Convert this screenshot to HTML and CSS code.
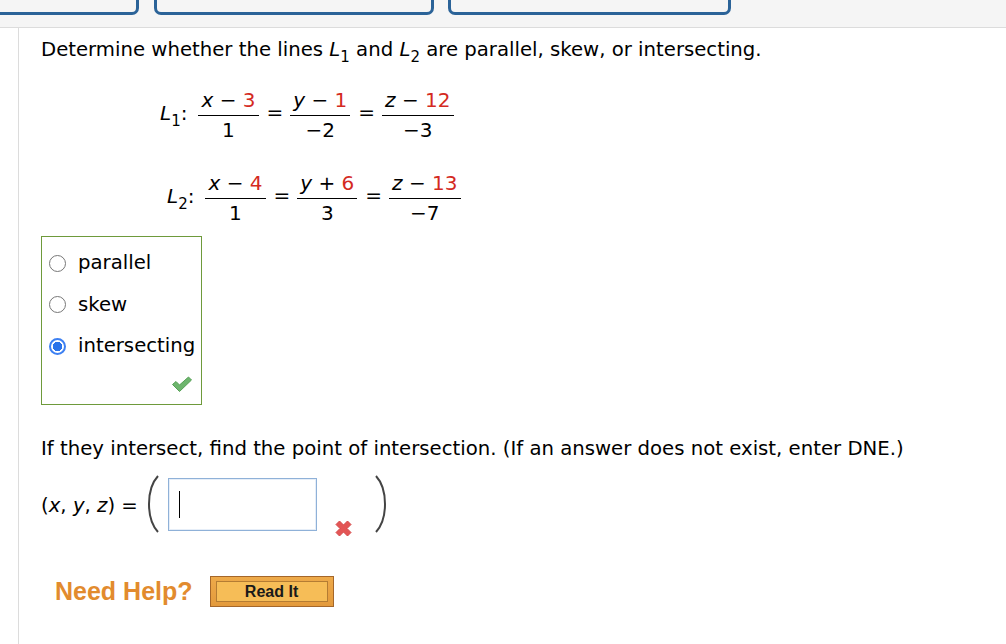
FILE: index.html
```html
<!DOCTYPE html>
<html>
<head>
<meta charset="utf-8">
<link rel="stylesheet" href="styles.css">
</head>
<body>
<div class="topbar">
  <div class="tab tab1"></div>
  <div class="tab tab2"></div>
  <div class="tab tab3"></div>
</div>
<div class="main">
  <p class="q">Determine whether the lines <i>L</i><sub>1</sub> and <i>L</i><sub>2</sub> are parallel, skew, or intersecting.</p>

  <div class="eq eq1">
    <span class="lab"><i>L</i><sub>1</sub>:</span>
    <span class="frac"><span class="num"><i>x</i> &minus; <span class="red">3</span></span><span class="den">1</span></span>
    <span class="eqs">=</span>
    <span class="frac"><span class="num"><i>y</i> &minus; <span class="red">1</span></span><span class="den">&minus;2</span></span>
    <span class="eqs">=</span>
    <span class="frac"><span class="num"><i>z</i> &minus; <span class="red">12</span></span><span class="den">&minus;3</span></span>
  </div>

  <div class="eq eq2">
    <span class="lab"><i>L</i><sub>2</sub>:</span>
    <span class="frac"><span class="num"><i>x</i> &minus; <span class="red">4</span></span><span class="den">1</span></span>
    <span class="eqs">=</span>
    <span class="frac"><span class="num"><i>y</i> + <span class="red">6</span></span><span class="den">3</span></span>
    <span class="eqs">=</span>
    <span class="frac"><span class="num"><i>z</i> &minus; <span class="red">13</span></span><span class="den">&minus;7</span></span>
  </div>

  <div class="choices">
    <label class="opt"><span class="radio"></span>parallel</label>
    <label class="opt"><span class="radio"></span>skew</label>
    <label class="opt"><span class="radio on"></span>intersecting</label>
    <div class="check">
      <svg width="22" height="17" viewBox="0 0 22 17"><path d="M1.5 8.5 L5 5.5 L8.5 9 L17.5 1 L20.5 4 L8.5 15.5 Z" fill="#6db56d" stroke="#55a055" stroke-width="1" stroke-linejoin="round"/></svg>
    </div>
  </div>

  <p class="q2">If they intersect, find the point of intersection. (If an answer does not exist, enter DNE.)</p>

  <div class="answer">
    <span class="xyz">(<i>x</i>, <i>y</i>, <i>z</i>) =</span>
    <svg class="paren" width="16" height="58" viewBox="0 0 16 58"><path d="M14 1 C2 14 2 44 14 57" fill="none" stroke="#444" stroke-width="2"/></svg>
    <span class="box"><span class="caret"></span></span>
    <span class="xmark">
      <svg width="21" height="19" viewBox="0 0 21 19"><path d="M3 5.5 L6.5 2 L10.5 6 L14.5 2 L18 5.5 L14 9.5 L18 13.5 L14.5 17 L10.5 13 L6.5 17 L3 13.5 L7 9.5 Z" fill="#e35555" stroke="#d54848" stroke-width="1" stroke-linejoin="round"/></svg>
    </span>
    <svg class="paren" width="16" height="58" viewBox="0 0 16 58"><path d="M2 1 C14 14 14 44 2 57" fill="none" stroke="#444" stroke-width="2"/></svg>
  </div>

  <div class="help">
    <span class="need">Need Help?</span>
    <span class="readit"><span class="inner">Read It</span></span>
  </div>
</div>
</body>
</html>
```
FILE: styles.css
```css
html, body {
  margin: 0;
  padding: 0;
  background: #fff;
  font-family: "DejaVu Sans", Verdana, sans-serif;
  color: #000;
}
.topbar {
  height: 27px;
  background: #f5f5f5;
  border-bottom: 1px solid #dcdcdc;
  position: relative;
  overflow: hidden;
}
.tab {
  position: absolute;
  top: -10px;
  height: 19px;
  border: 3px solid #2b6398;
  border-radius: 0 0 7px 7px;
  background: #f5f5f5;
}
.tab1 { left: -20px; width: 153px; }
.tab2 { left: 154px; width: 274px; }
.tab3 { left: 448px; width: 277px; }

.main {
  margin-left: 18px;
  border-left: 1px solid #dcdcdc;
  padding-left: 22px;
  min-height: 616px;
  padding-top: 10px;
  box-sizing: border-box;
}
.q, .q2 {
  font-size: 19.7px;
  margin: 0;
  line-height: 24px;
}
sub { font-size: 15px; vertical-align: -6px; line-height: 0; }
i { font-style: italic; }
.red { color: #d42a1f; }

.eq {
  display: flex;
  align-items: center;
  font-size: 20px;
  line-height: 20px;
}
.eq1 { margin-top: 28px; padding-left: 119px; }
.eq2 { margin-top: 33px; padding-left: 126px; }
.lab { margin-right: 11px; padding-bottom: 4px; }
.frac {
  display: inline-flex;
  flex-direction: column;
  align-items: center;
}
.num {
  align-self: stretch;
  text-align: center;
  border-bottom: 1px solid #000;
  padding: 0 3px 5px;
  white-space: nowrap;
}
.den { padding-top: 4px; }
.eqs { margin: 0 7px 0 8px; padding-bottom: 6px; }

.choices {
  margin-top: 13px;
  width: 159px;
  height: 167px;
  border: 1px solid #6e9a3b;
  position: relative;
  font-size: 19.7px;
  line-height: 20px;
}
.opt {
  display: flex;
  align-items: center;
  height: 20px;
  margin-left: 7px;
}
.opt:first-child { margin-top: 16px; }
.opt + .opt { margin-top: 21.5px; }
.radio {
  width: 17px;
  height: 17px;
  border: 1px solid #777;
  border-radius: 50%;
  box-sizing: border-box;
  margin-right: 12px;
  background: #fff;
}
.radio.on {
  border: 2px solid #3d80f2;
  background: radial-gradient(circle, #2a73ea 0 4.5px, #fff 5px);
}
.check {
  position: absolute;
  right: 8px;
  bottom: 11px;
}
.check svg { display: block; }

.q2 { margin-top: 32px; }

.answer {
  display: flex;
  align-items: center;
  margin-top: 14px;
  font-size: 19.7px;
  line-height: 20px;
}
.xyz { margin-right: 6px; padding-top: 4px; }
.paren { display: block; }
.box {
  width: 149px;
  height: 53px;
  border: 1px solid #8fb1d8;
  box-shadow: inset 0 0 0 1px #e6eef8;
  margin-left: 8px;
  display: flex;
  align-items: center;
  box-sizing: border-box;
}
.caret {
  width: 1px;
  height: 27px;
  background: #000;
  margin-left: 10px;
}
.xmark { align-self: flex-end; margin: 0 20px -5px 16px; display: block; height: 19px; }
.xmark svg { display: block; }

.help {
  display: flex;
  align-items: center;
  margin-top: 43px;
  padding-left: 14px;
}
.need {
  font-family: "Liberation Sans", Arial, sans-serif;
  font-weight: bold;
  font-size: 25px;
  line-height: 29px;
  color: #e28b2e;
  margin-right: 17px;
}
.readit {
  display: inline-block;
  width: 124px;
  height: 31px;
  box-sizing: border-box;
  border: 1px solid #a5672a;
  background: linear-gradient(#eeaa4a, #e39a3c);
  padding: 4px 5px;
}
.inner {
  display: block;
  height: 100%;
  box-sizing: border-box;
  border: 1px solid #b47c33;
  background: #f6bd57;
  font-family: "Liberation Sans", Arial, sans-serif;
  font-weight: bold;
  font-size: 16px;
  text-align: center;
  line-height: 19px;
  color: #1a1a1a;
}
```
